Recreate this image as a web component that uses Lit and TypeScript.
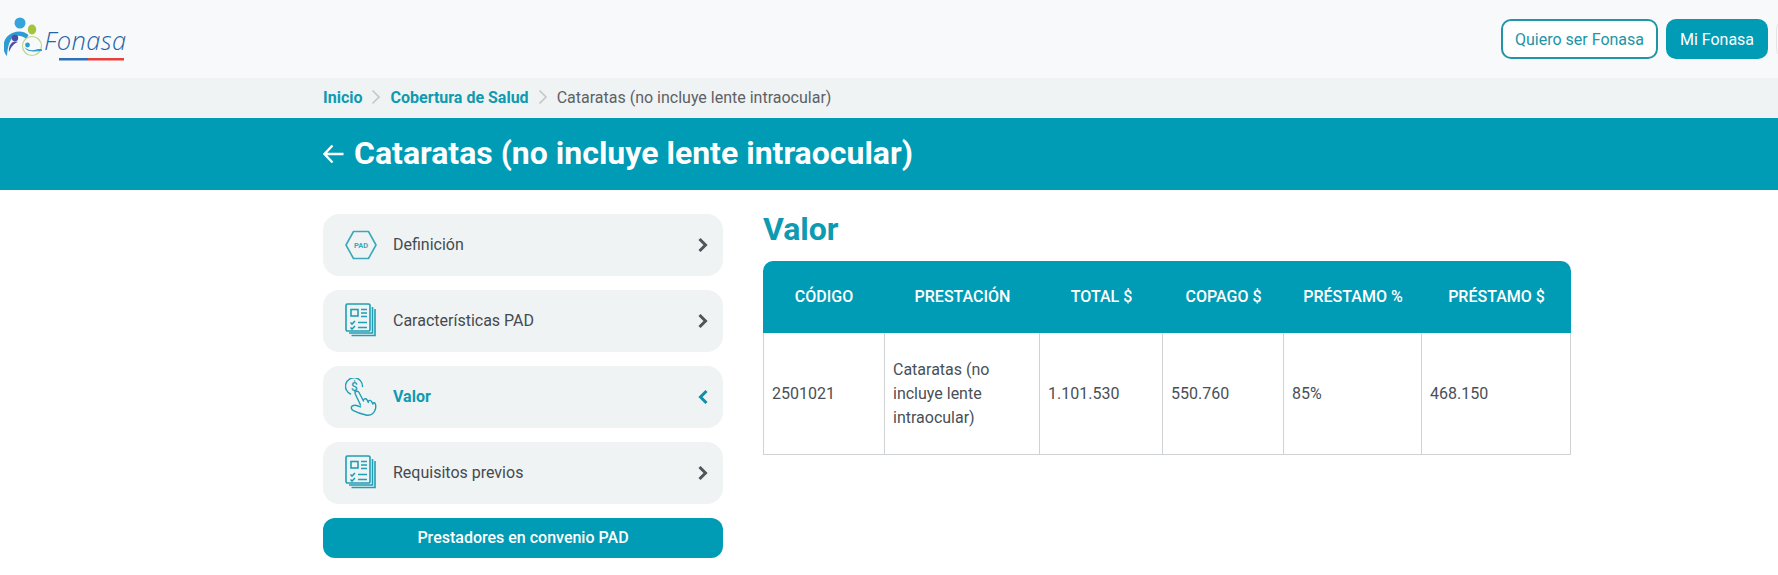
import { LitElement, html, css, svg } from "lit";
import { customElement } from "lit/decorators.js";

const padIcon = html`<svg width="34" height="30" viewBox="0 0 34 30" fill="none">
  <path d="M9.500 1.500h15L32 15l-7.500 13.500h-15L2 15z" stroke="#3aa9b9" stroke-width="1.600" stroke-linejoin="round"/>
  <text x="17" y="18" text-anchor="middle" font-family="Roboto" font-weight="700" font-size="7.500" fill="#3aa9b9">PAD</text>
</svg>`;

const docIcon = html`<svg width="32" height="36" viewBox="0 0 32 36" fill="none" stroke="#1f9fb3" stroke-width="1.600">
  <path d="M1 26.500V2.500a1.500 1.500 0 0 1 1.500-1.500h21a1.500 1.500 0 0 1 1.500 1.500v24a1.500 1.500 0 0 1-1.500 1.500h-21A1.500 1.500 0 0 1 1 26.500z"/>
  <path d="M27.500 4v26H4M30 6v26.500H6.500"/>
  <rect x="6" y="6.500" width="7" height="6.500"/>
  <path d="M16 6.500h6M16 10h6M16 13.500h6M13 19.500h9M13 24.500h9"/>
  <path d="M5.500 19.500l1.500 1.500 3-3M5.500 24.500l1.500 1.500 3-3"/>
</svg>`;

const handIcon = html`<svg width="32" height="38" viewBox="0 0 32 38" fill="none" stroke="#1f9fb3" stroke-width="1.400" stroke-linecap="round" stroke-linejoin="round">
  <path d="M5.500 16A8.500 8.500 0 1 1 17.500 8.500"/>
  <text x="9.500" y="12.500" text-anchor="middle" font-family="Roboto" font-weight="500" font-size="12" fill="#1f9fb3" stroke="none">$</text>
  <path transform="translate(1.500 2)" d="M14 25 8.800 14c-1-2.500 2.500-3.800 3.700-1.500L17 21c-.6-2.200 2.400-3.200 3.500-1.200l1.300 2.600c-.5-2.100 2.300-2.800 3.300-.9l1.300 2.600c-.4-1.500 1.700-2 2.400-.4.700 2 .6 4.500-.4 6.800-1.600 3.600-5 5.300-9 4.500-4.500-.9-9.300-2.600-12.500-4.300-2.500-1.400-2.700-3.600-1-4.800 1.800-1.200 5-.6 8.100 1"/>
</svg>`;

const chevron = (left = false) => html`<svg class="chev" width="12" height="16" viewBox="0 0 12 16" fill="none">
  <path d=${left ? "M9.500 2 3.500 8l6 6" : "M2.500 2l6 6-6 6"} stroke="currentColor" stroke-width="3"/>
</svg>`;

const crumbSep = svg`<svg width="12" height="18" viewBox="0 0 12 18" fill="none"><path d="M2.500 2.500l6.500 6.500-6.500 6.500" stroke="#c4c8cb" stroke-width="1.700"/></svg>`;

const items = [
  { label: "Definición", icon: padIcon },
  { label: "Características PAD", icon: docIcon },
  { label: "Valor", icon: handIcon, active: true },
  { label: "Requisitos previos", icon: docIcon },
];

const cols = [
  ["CÓDIGO", "2501021"],
  ["PRESTACIÓN", "Cataratas (no incluye lente intraocular)"],
  ["TOTAL $", "1.101.530"],
  ["COPAGO $", "550.760"],
  ["PRÉSTAMO %", "85%"],
  ["PRÉSTAMO $", "468.150"],
];

@customElement("app-root")
export class AppRoot extends LitElement {
  static styles = css`
    :host {
      display: block;
      font-family: Roboto, "Liberation Sans", sans-serif;
      font-size: 16px;
      color: #495057;
      background: #fff;
      height: 575px;
      overflow: hidden;
    }
    .top {
      height: 78px;
      background: #f8f9fb;
      display: flex;
      align-items: center;
      justify-content: space-between;
      padding: 0 10px 0 4px;
      overflow: hidden;
    }
    .logo {
      position: relative;
      width: 124px;
      height: 44px;
    }
    .logo svg { display: block; }
    .logo-text {
      position: absolute;
      left: 40px;
      top: 8px;
      font-family: "Open Sans", sans-serif;
      font-style: italic;
      font-weight: 300;
      font-size: 25.500px;
      line-height: 30px;
      letter-spacing: 0.400px;
      color: #2565a8;
    }
    .logo-rule {
      position: absolute;
      left: 55px;
      top: 41px;
    }
    .actions { display: flex; gap: 8px; }
    .btn {
      height: 40px;
      box-sizing: border-box;
      border-radius: 10px;
      display: flex;
      align-items: center;
      justify-content: center;
      font-size: 16px;
    }
    .btn.outline {
      width: 157px;
      border: 2px solid #2194a8;
      background: #fff;
      color: #2194a8;
    }
    .btn.solid {
      width: 102px;
      background: #009bb5;
      color: #fff;
    }
    .btn.cut {
      flex: none;
      width: 40px;
      margin-right: -48px;
      border: 1px solid #e3e5e8;
      background: #fbfbfc;
    }
    .crumbs {
      height: 40px;
      box-sizing: border-box;
      padding-bottom: 2px;
      background: #f0f3f4;
      display: flex;
      align-items: center;
      padding-left: 323px;
      gap: 8px;
      font-size: 16px;
    }
    .crumbs a { color: #0e9ab0; font-weight: 700; }
    .crumbs span { color: #5c6166; }
    .banner {
      height: 72px;
      box-sizing: border-box;
      padding-bottom: 2px;
      background: #009bb5;
      color: #fff;
      display: flex;
      align-items: center;
      padding-left: 322px;
      gap: 9px;
    }
    .banner svg { margin-top: 2px; }
    .banner h1 {
      margin: 0;
      font-size: 32px;
      font-weight: 700;
      line-height: 40px;
    }
    .main {
      display: grid;
      grid-template-columns: 400px 808px;
      gap: 40px;
      padding: 24px 0 0 323px;
    }
    .side { display: flex; flex-direction: column; gap: 14px; }
    .item {
      height: 62px;
      border-radius: 16px;
      background: #f0f3f4;
      display: grid;
      grid-template-columns: 70px 1fr auto;
      align-items: center;
      padding-right: 14px;
    }
    .ico { display: flex; justify-content: center; padding-left: 6px; }
    .item .label { color: #454a4f; padding-bottom: 2px; }
    .item .chev { color: #50555a; display: block; }
    .item.active .label { color: #0e9ab0; font-weight: 700; }
    .item.active .chev { color: #0e8fa7; }
    .cta {
      height: 40px;
      box-sizing: border-box;
      padding-bottom: 2px;
      border-radius: 12px;
      background: #009bb5;
      color: #fff;
      font-weight: 500;
      display: flex;
      align-items: center;
      justify-content: center;
    }
    h2 {
      margin: -1px 0 16px;
      font-size: 32px;
      line-height: 32px;
      font-weight: 700;
      color: #0e9ab0;
    }
    .table {
      display: grid;
      grid-template-columns: 122px 155px 123px 121px 138px 149px;
    }
    .th {
      height: 72px;
      box-sizing: border-box;
      padding-bottom: 2px;
      background: #009bb5;
      color: #fff;
      font-weight: 500;
      display: flex;
      align-items: center;
      justify-content: center;
    }
    .th.first { border-top-left-radius: 10px; }
    .th.last { border-top-right-radius: 10px; }
    .td {
      height: 122px;
      box-sizing: border-box;
      border-right: 1px solid #d0d3d5;
      border-bottom: 1px solid #d0d3d5;
      padding: 0 8px 0 8px;
      display: flex;
      align-items: center;
      line-height: 24px;
      color: #495057;
    }
    .td.first { border-left: 1px solid #d0d3d5; }
  `;

  render() {
    return html`
      <div class="top">
        <div class="logo">
          <svg width="46" height="44" viewBox="4 17 46 44" fill="none">
            <circle cx="20" cy="23" r="5.500" fill="#35a4dc"/>
            <path d="M7 56C1.500 50 2.500 40 9 35c5.500-4.500 14-5 19.500 0l-2.300 4c-3.500-3-8.200-4-11.700-2.500C10 38.500 7.500 46 7 56z" fill="#2f9bd3"/>
            <ellipse cx="32" cy="29.500" rx="4.200" ry="5" fill="#a4c43c"/>
            <circle cx="15" cy="38" r="3.200" fill="#4a4fa5"/>
            <path d="M9 52c-.5-5 1.500-9.500 5.500-10.500 1.800-.2 3.500.5 3.500.5-3.500 1-6.500 4-9 10z" fill="#4a4fa5"/>
            <circle cx="32" cy="46" r="9.500" stroke="#bcd58a" stroke-width="1.200"/>
            <circle cx="27.500" cy="45" r="2.400" fill="#2f9bd3"/>
            <path d="M24.500 47c2.500 3 7 4 12 2.500 2-.6 4-.6 5.500 0l0 1.500c-6 .5-15 2-17.500-4z" fill="#2f9bd3"/>
          </svg>
          <div class="logo-text">Fonasa</div>
          <svg class="logo-rule" width="65" height="3" viewBox="0 0 65 3">
            <rect width="29" height="2.500" fill="#2f6fb8"/><rect x="29" width="36" height="2.500" fill="#e8403c"/>
          </svg>
        </div>
        <div class="actions">
          <div class="btn outline">Quiero ser Fonasa</div>
          <div class="btn solid">Mi Fonasa</div>
          <div class="btn cut"></div>
        </div>
      </div>
      <div class="crumbs">
        <a>Inicio</a>${crumbSep}<a>Cobertura de Salud</a>${crumbSep}<span>Cataratas (no incluye lente intraocular)</span>
      </div>
      <div class="banner">
        <svg width="23" height="20" viewBox="0 0 23 20" fill="none"><path d="M21.500 10H2.500M10.500 1.500 2.500 10l8 8.500" stroke="#fff" stroke-width="2.400"/></svg>
        <h1>Cataratas (no incluye lente intraocular)</h1>
      </div>
      <div class="main">
        <div class="side">
          ${items.map(
            (i) => html`<div class="item ${i.active ? "active" : ""}">
              <div class="ico">${i.icon}</div>
              <div class="label">${i.label}</div>
              ${chevron(!!i.active)}
            </div>`
          )}
          <div class="cta">Prestadores en convenio PAD</div>
        </div>
        <div>
          <h2>Valor</h2>
          <div class="table">
            ${cols.map(
              (c, n) => html`<div class="th ${n === 0 ? "first" : ""} ${n === cols.length - 1 ? "last" : ""}">${c[0]}</div>`
            )}
            ${cols.map((c, n) => html`<div class="td ${n === 0 ? "first" : ""}"><div>${c[1]}</div></div>`)}
          </div>
        </div>
      </div>
    `;
  }
}
